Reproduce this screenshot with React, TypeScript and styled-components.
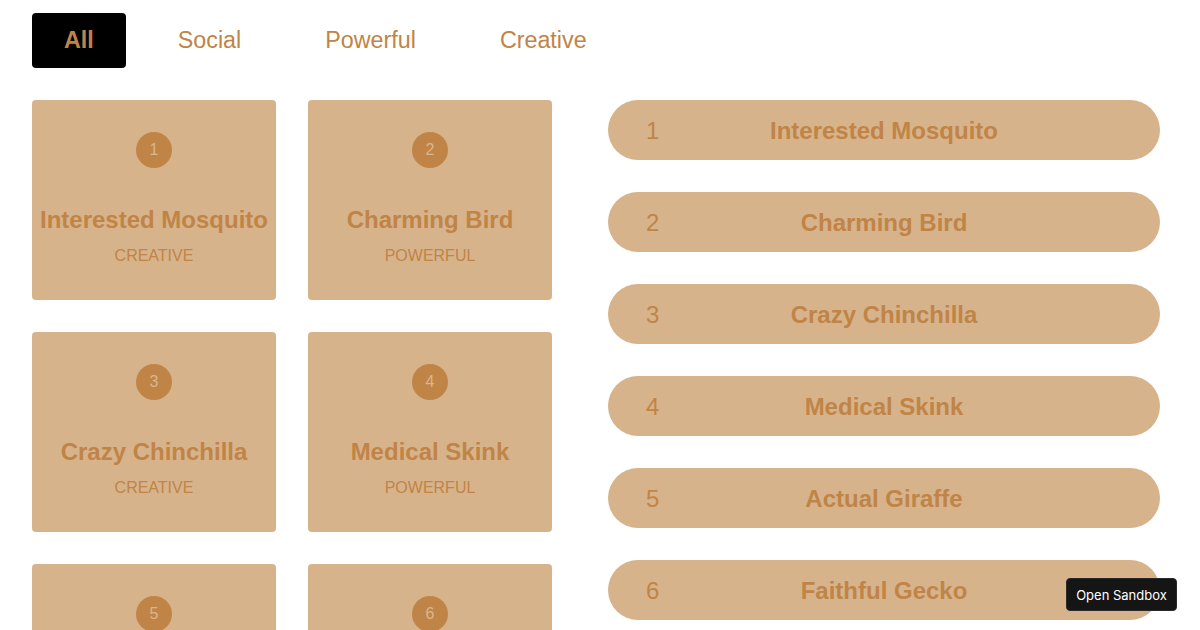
import React, { useState } from "react";
import styled, { createGlobalStyle } from "styled-components";

const Global = createGlobalStyle`
  html, body { margin: 0; padding: 0; background: #fff; }
  body { font-family: "Liberation Sans", Arial, sans-serif; overflow: hidden; }
  * { box-sizing: border-box; }
`;

const TAN = "#d7b38b";
const BROWN = "#c08446";

const Page = styled.div`
  padding: 13px 32px 0 32px;
  width: 1200px;
  height: 630px;
  overflow: hidden;
`;

const Tabs = styled.nav`
  display: flex;
  gap: 20px;
  height: 55px;
`;

const Tab = styled.button<{ $active?: boolean }>`
  border: none;
  border-radius: 4px;
  padding: 0 32px;
  height: 55px;
  font-family: "Liberation Sans", Arial, sans-serif;
  font-size: 23.3px;
  font-weight: ${(p) => (p.$active ? 700 : 400)};
  color: ${BROWN};
  background: ${(p) => (p.$active ? "#000" : "transparent")};
  cursor: pointer;
`;

const Main = styled.div`
  display: flex;
  gap: 56px;
  margin-top: 32px;
`;

const Grid = styled.div`
  display: grid;
  grid-template-columns: 244px 244px;
  gap: 32px;
  width: 520px;
`;

const Card = styled.div`
  background: ${TAN};
  border-radius: 4px;
  height: 200px;
  display: flex;
  flex-direction: column;
  align-items: center;
  padding-top: 32px;
`;

const Badge = styled.div`
  width: 36px;
  height: 36px;
  border-radius: 50%;
  background: ${BROWN};
  color: #d9b68d;
  font-size: 16px;
  display: flex;
  align-items: center;
  justify-content: center;
`;

const CardTitle = styled.div`
  margin-top: 38px;
  font-size: 24px;
  line-height: 28px;
  font-weight: 700;
  color: ${BROWN};
  white-space: nowrap;
`;

const CardTag = styled.div`
  margin-top: 13px;
  font-size: 16px;
  line-height: 18px;
  color: ${BROWN};
  text-transform: uppercase;
`;

const List = styled.div`
  display: flex;
  flex-direction: column;
  gap: 32px;
  width: 552px;
`;

const Pill = styled.div`
  position: relative;
  height: 60px;
  border-radius: 30px;
  background: ${TAN};
  display: flex;
  align-items: center;
  justify-content: center;
  padding-top: 2px;
  color: ${BROWN};
`;

const PillNum = styled.span`
  position: absolute;
  left: 38px;
  font-size: 24px;
  width: 12px;
  text-align: center;
`;

const PillTitle = styled.span`
  font-size: 24px;
  font-weight: 700;
`;

const Sandbox = styled.button`
  position: fixed;
  left: 1066px;
  top: 578px;
  width: 111px;
  height: 33px;
  border: 1px solid #2a2a2a;
  border-radius: 4px;
  background: #151515;
  color: #fff;
  font-family: "Inter", "Liberation Sans", sans-serif;
  font-size: 13px;
  padding: 0;
`;

const items = [
  { name: "Interested Mosquito", tag: "creative" },
  { name: "Charming Bird", tag: "powerful" },
  { name: "Crazy Chinchilla", tag: "creative" },
  { name: "Medical Skink", tag: "powerful" },
  { name: "Actual Giraffe", tag: "social" },
  { name: "Faithful Gecko", tag: "social" },
];

export default function App() {
  const [active, setActive] = useState("All");
  return (
    <Page>
      <Global />
      <Tabs>
        {["All", "Social", "Powerful", "Creative"].map((t) => (
          <Tab key={t} $active={active === t} onClick={() => setActive(t)}>
            {t}
          </Tab>
        ))}
      </Tabs>
      <Main>
        <Grid>
          {items.map((it, i) => (
            <Card key={it.name}>
              <Badge>{i + 1}</Badge>
              <CardTitle>{it.name}</CardTitle>
              <CardTag>{it.tag}</CardTag>
            </Card>
          ))}
        </Grid>
        <List>
          {items.map((it, i) => (
            <Pill key={it.name}>
              <PillNum>{i + 1}</PillNum>
              <PillTitle>{it.name}</PillTitle>
            </Pill>
          ))}
        </List>
      </Main>
      <Sandbox>Open Sandbox</Sandbox>
    </Page>
  );
}
